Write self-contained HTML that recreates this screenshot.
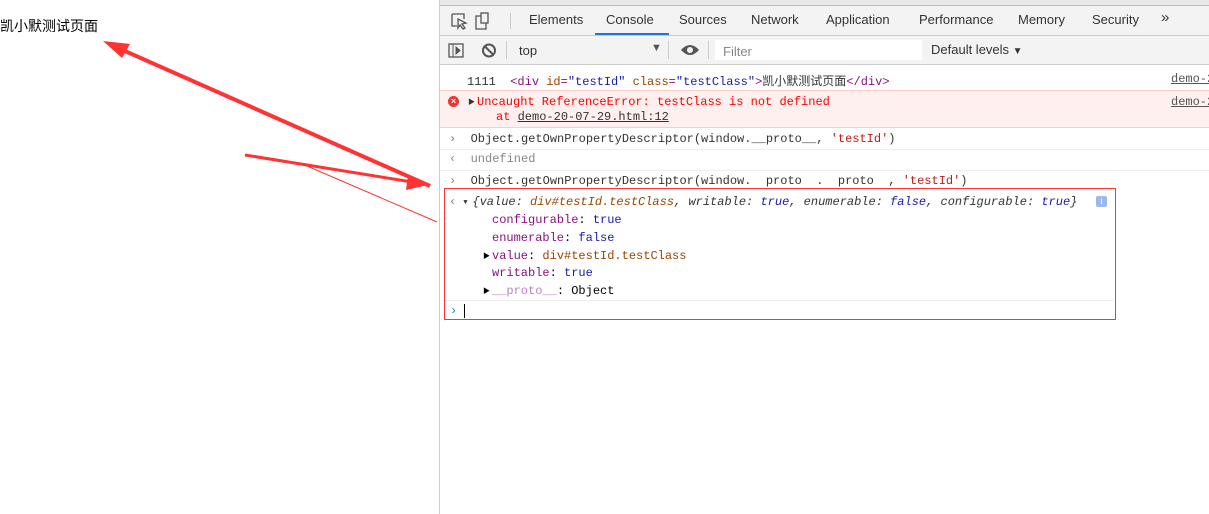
<!DOCTYPE html><html><head><meta charset="utf-8"><style>
body{margin:0;width:1209px;height:514px;overflow:hidden;background:#fff;font-family:"Liberation Sans","Noto Sans CJK SC",sans-serif;position:relative}
.mono{font-family:"Liberation Mono","Noto Sans CJK SC",monospace;font-size:12px}
#dt{position:absolute;left:439px;top:0;width:770px;height:514px;border-left:1px solid #ccc;background:#fff}
.bar{position:absolute;left:0;right:0;background:#f3f3f3;border-bottom:1px solid #ccc}
.tab{position:absolute;top:6px;font-size:13px;color:#333}
.line{position:absolute;left:0;right:0;white-space:pre}
.pu{color:#881280}.br{color:#994500}.bl{color:#1a1aa6}.rd{color:#c41a16}.gr{color:#808080}
.tri{display:inline-block;font-size:7px;width:9px;vertical-align:1px}
</style></head><body>
<div style="position:absolute;left:0;top:16px;font-size:14px">凯小默测试页面</div>
<div id="dt">
<div class="bar" style="top:0;height:5px;background:#e8e8e8;border-bottom:1px solid #bbb"></div>
<div class="bar" style="top:6px;height:29px">
<svg style="position:absolute;left:10px;top:6px" width="40" height="18"><path d="M2 2h12v5M2 2v12h5M8 7l8 4-4 1 3 4-2 1-3-4-2 3z" fill="none" stroke="#555" stroke-width="1.3"/><rect x="26" y="4" width="10" height="13" fill="none" stroke="#555" stroke-width="1.3"/><rect x="31" y="1" width="7" height="10" fill="#f3f3f3" stroke="#555" stroke-width="1.3"/></svg>
<div style="position:absolute;left:70px;top:7px;width:1px;height:16px;background:#ccc"></div>
<span class="tab" style="left:89px">Elements</span>
<span class="tab" style="left:166px">Console</span>
<div style="position:absolute;left:155px;top:27px;width:74px;height:2px;background:#1a73e8"></div>
<span class="tab" style="left:239px">Sources</span>
<span class="tab" style="left:311px">Network</span>
<span class="tab" style="left:386px">Application</span>
<span class="tab" style="left:479px">Performance</span>
<span class="tab" style="left:578px">Memory</span>
<span class="tab" style="left:652px">Security</span>
<span class="tab" style="left:721px;top:3px;font-size:15px">»</span>
</div>
<div class="bar" style="top:36px;height:28px">
<svg style="position:absolute;left:8px;top:6px" width="50" height="18"><rect x="1" y="2" width="14" height="13" fill="none" stroke="#555" stroke-width="1.3"/><path d="M5 2v13M8 5l4 3.5-4 3.5z" fill="#555" stroke="#555"/><circle cx="41" cy="8.5" r="6" fill="none" stroke="#555" stroke-width="2"/><path d="M37 4.5l8 8" stroke="#555" stroke-width="2"/></svg>
<div style="position:absolute;left:66px;top:5px;width:1px;height:18px;background:#ccc"></div>
<span style="position:absolute;left:79px;top:7px;font-size:13px;color:#333">top</span>
<span style="position:absolute;left:211px;top:6px;font-size:11px;color:#555">▼</span>
<div style="position:absolute;left:228px;top:5px;width:1px;height:18px;background:#ccc"></div>
<svg style="position:absolute;left:240px;top:7px" width="20" height="14"><path d="M1 7Q10-3 19 7Q10 17 1 7z" fill="#555"/><circle cx="10" cy="7" r="3" fill="#f3f3f3"/></svg>
<div style="position:absolute;left:268px;top:5px;width:1px;height:18px;background:#ccc"></div>
<div style="position:absolute;left:275px;top:4px;width:207px;height:20px;background:#fff"></div>
<span style="position:absolute;left:283px;top:8px;font-size:13px;color:#888">Filter</span>
<span style="position:absolute;left:491px;top:6px;font-size:13px;color:#333">Default levels <span style="font-size:10px">▼</span></span>
</div>
<div class="line mono" style="top:72px;left:27px;color:#333">1111  <span class="pu">&lt;div</span> <span class="br">id</span><span class="pu">=</span><span class="bl">"testId"</span> <span class="br">class</span><span class="pu">=</span><span class="bl">"testClass"</span><span class="pu">&gt;</span>凯小默测试页面<span class="pu">&lt;/div&gt;</span></div>
<div class="line mono" style="top:72px;left:731px;color:#555;text-decoration:underline">demo-2</div>
<div style="position:absolute;left:0;right:0;top:90px;height:36px;background:#fff0f0;border-top:1px solid #fcc;border-bottom:1px solid #fcc"></div>
<div style="position:absolute;left:8px;top:96px;width:11px;height:11px;border-radius:50%;background:#e33;color:#fff;font-size:9px;line-height:11px;text-align:center;font-weight:bold">×</div>
<div class="line mono" style="top:95px;left:28px;color:#f00"><span class="tri" style="color:#333">▶</span>Uncaught ReferenceError: testClass is not defined</div>
<div class="line mono" style="top:110px;left:56px;color:#f00">at <span style="color:#333;text-decoration:underline">demo-20-07-29.html:12</span></div>
<div class="line mono" style="top:95px;left:731px;color:#555;text-decoration:underline">demo-2</div>
<div class="line mono" style="top:132px;left:9px;color:#333"><span class="gr">›</span>  Object.getOwnPropertyDescriptor(window.__proto__, <span class="rd">'testId'</span>)</div>
<div style="position:absolute;left:0;right:0;top:149px;border-top:1px solid #eee"></div>
<div class="line mono" style="top:152px;left:9px;color:#888">‹  undefined</div>
<div style="position:absolute;left:0;right:0;top:170px;border-top:1px solid #eee"></div>
<div class="line mono" style="top:174px;left:9px;color:#333"><span class="gr">›</span>  Object.getOwnPropertyDescriptor(window.  proto  .  proto  , <span class="rd">'testId'</span>)</div>
<div style="position:absolute;left:4px;top:188px;width:670px;height:130px;border:1px solid #f33"></div>
<div class="line mono" style="top:195px;left:9px;color:#333;font-style:italic"><span class="gr" style="font-style:normal">‹ </span><span class="tri" style="font-style:normal">▼</span>{value: <span class="br">div#testId.testClass</span>, writable: <span class="bl">true</span>, enumerable: <span class="bl">false</span>, configurable: <span class="bl">true</span>}</div>
<div style="position:absolute;left:656px;top:196px;width:11px;height:11px;background:#9ab8ec;border-radius:2px;color:#fff;font-size:9px;text-align:center;line-height:11px">i</div>
<div class="line mono" style="top:213px;left:52px"><span class="pu">configurable</span>: <span class="bl">true</span></div>
<div class="line mono" style="top:231px;left:52px"><span class="pu">enumerable</span>: <span class="bl">false</span></div>
<div class="line mono" style="top:249px;left:43px"><span class="tri">▶</span><span class="pu">value</span>: <span class="br">div#testId.testClass</span></div>
<div class="line mono" style="top:266px;left:52px"><span class="pu">writable</span>: <span class="bl">true</span></div>
<div class="line mono" style="top:284px;left:43px"><span class="tri">▶</span><span style="color:#c080c0">__proto__</span>: Object</div>
<div style="position:absolute;left:5px;right:96px;top:300px;border-top:1px solid #eee"></div>
<div class="line mono" style="top:304px;left:10px;color:#1a73e8">› <span style="display:inline-block;width:1px;height:14px;background:#000;vertical-align:middle"></span></div>
</div>
<svg style="position:absolute;left:0;top:0" width="1209" height="514">
<line x1="430" y1="186" x2="118" y2="48" stroke="#f33" stroke-width="4"/>
<polygon points="103,41 130,44 122,58" fill="#f33"/>
<line x1="245" y1="155" x2="412" y2="182" stroke="#f33" stroke-width="3"/>
<polygon points="428,185 408,175 406,190" fill="#f33"/>
<line x1="300" y1="163" x2="437" y2="222" stroke="#f33" stroke-width="1"/>
</svg>
</body></html>
